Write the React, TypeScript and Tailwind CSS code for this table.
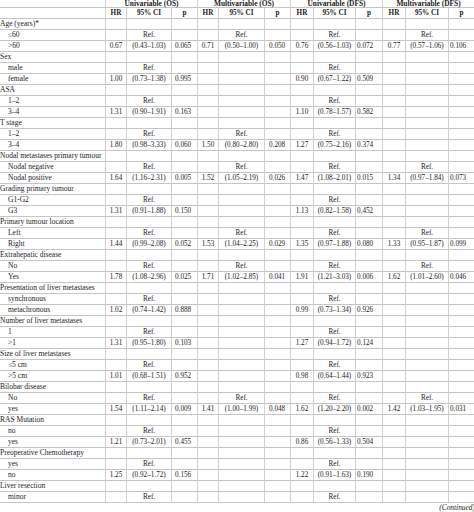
import React from "react";

type G = null | "R" | [string, string, string];
type Row = { label: string; cat?: boolean; g?: G[] };

const rows: Row[] = [
  { label: "Age (years)*", cat: true },
  { label: "≤60", g: ["R", "R", "R", "R"] },
  { label: ">60", g: [["0.67", "(0.43–1.03)", "0.065"], ["0.71", "(0.50–1.00)", "0.050"], ["0.76", "(0.56–1.03)", "0.072"], ["0.77", "(0.57–1.06)", "0.106"]] },
  { label: "Sex", cat: true },
  { label: "male", g: ["R", null, "R", null] },
  { label: "female", g: [["1.00", "(0.73–1.38)", "0.995"], null, ["0.90", "(0.67–1.22)", "0.509"], null] },
  { label: "ASA", cat: true },
  { label: "1–2", g: ["R", null, "R", null] },
  { label: "3–4", g: [["1.31", "(0.90–1.91)", "0.163"], null, ["1.10", "(0.78–1.57)", "0.582"], null] },
  { label: "T stage", cat: true },
  { label: "1–2", g: ["R", "R", "R", null] },
  { label: "3–4", g: [["1.80", "(0.98–3.33)", "0.060"], ["1.50", "(0.80–2.80)", "0.208"], ["1.27", "(0.75–2.16)", "0.374"], null] },
  { label: "Nodal metastases primary tumour", cat: true },
  { label: "Nodal negative", g: ["R", "R", "R", "R"] },
  { label: "Nodal positive", g: [["1.64", "(1.16–2.31)", "0.005"], ["1.52", "(1.05–2.19)", "0.026"], ["1.47", "(1.08–2.01)", "0.015"], ["1.34", "(0.97–1.84)", "0.073"]] },
  { label: "Grading primary tumour", cat: true },
  { label: "G1-G2", g: ["R", null, "R", null] },
  { label: "G3", g: [["1.31", "(0.91–1.88)", "0.150"], null, ["1.13", "(0.82–1.58)", "0.452"], null] },
  { label: "Primary tumour location", cat: true },
  { label: "Left", g: ["R", "R", "R", "R"] },
  { label: "Right", g: [["1.44", "(0.99–2.08)", "0.052"], ["1.53", "(1.04–2.25)", "0.029"], ["1.35", "(0.97–1.88)", "0.080"], ["1.33", "(0.95–1.87)", "0.099"]] },
  { label: "Extrahepatic disease", cat: true },
  { label: "No", g: ["R", "R", "R", "R"] },
  { label: "Yes", g: [["1.78", "(1.08–2.96)", "0.025"], ["1.71", "(1.02–2.85)", "0.041"], ["1.91", "(1.21–3.03)", "0.006"], ["1.62", "(1.01–2.60)", "0.046"]] },
  { label: "Presentation of liver metastases", cat: true },
  { label: "synchronous", g: ["R", null, "R", null] },
  { label: "metachronous", g: [["1.02", "(0.74–1.42)", "0.888"], null, ["0.99", "(0.73–1.34)", "0.926"], null] },
  { label: "Number of liver metastases", cat: true },
  { label: "1", g: ["R", null, "R", null] },
  { label: ">1", g: [["1.31", "(0.95–1.80)", "0.103"], null, ["1.27", "(0.94–1.72)", "0.124"], null] },
  { label: "Size of liver metastases", cat: true },
  { label: "≤5 cm", g: ["R", null, "R", null] },
  { label: ">5 cm", g: [["1.01", "(0.68–1.51)", "0.952"], null, ["0.98", "(0.64–1.44)", "0.923"], null] },
  { label: "Bilobar disease", cat: true },
  { label: "No", g: ["R", "R", "R", "R"] },
  { label: "yes", g: [["1.54", "(1.11–2.14)", "0.009"], ["1.41", "(1.00–1.99)", "0.048"], ["1.62", "(1.20–2.20)", "0.002"], ["1.42", "(1.03–1.95)", "0.031"]] },
  { label: "RAS Mutation", cat: true },
  { label: "no", g: ["R", null, "R", null] },
  { label: "yes", g: [["1.21", "(0.73–2.01)", "0.455"], null, ["0.86", "(0.56–1.33)", "0.504"], null] },
  { label: "Preoperative Chemotherapy", cat: true },
  { label: "yes", g: ["R", null, "R", null] },
  { label: "no", g: [["1.25", "(0.92–1.72)", "0.156"], null, ["1.22", "(0.91–1.63)", "0.190"], null] },
  { label: "Liver resection", cat: true },
  { label: "minor", g: ["R", null, "R", null] },
];

const line = "border-b border-[#c6c6c6]";
const cell = `h-[11px] leading-[10px] whitespace-nowrap ${line} border-l border-l-[#d0d0d0] text-center text-[7.2px]`;
const pCell = ["pl-[3px] text-left", "pl-[4px] text-left", "pl-[1px] text-left", "pl-[1px] text-left"];

function Group({ v, i }: { v: G; i: number }) {
  const hr = v && v !== "R" ? v[0] : "";
  const ci = v === "R" ? "Ref." : v ? v[1] : "";
  const p = v && v !== "R" ? v[2] : "";
  return (
    <>
      <div className={cell}>{hr}</div>
      <div className={cell}>{ci}</div>
      <div className={`${cell} ${pCell[i]}`}>{p}</div>
    </>
  );
}

export default function App() {
  const groups = ["Univariable (OS)", "Multivariable (OS)", "Univariable (DFS)", "Multivariable (DFS)"];
  return (
    <div className="w-[474px] h-[512px] overflow-hidden bg-white text-[#1c1c1c] font-['Liberation_Serif',serif]">
      <div className="grid grid-cols-[105px_21px_45px_26px_21px_46px_26px_23px_42px_27px_23px_43px_26px]">
        <div className={`h-[8px] ${line}`}></div>
        {groups.map((g) => (
          <div
            key={g}
            className={`col-span-3 h-[8px] leading-[7px] font-bold text-center whitespace-nowrap text-[7.4px] ${line} border-l border-l-[#d0d0d0]`}
          >
            {g}
          </div>
        ))}
        <div className={`h-[11px] ${line}`}></div>
        {groups.map((g) => (
          <React.Fragment key={g}>
            <div className={`${cell} font-bold`}>HR</div>
            <div className={`${cell} font-bold`}>95% CI</div>
            <div className={`${cell} font-bold`}>p</div>
          </React.Fragment>
        ))}
        {rows.map((r, idx) => (
          <React.Fragment key={idx}>
            <div
              className={`h-[11px] leading-[10px] whitespace-nowrap text-[7.5px] ${line} ${
                r.cat ? "pl-0" : "pl-[8px]"
              }`}
            >
              {r.label}
            </div>
            {(r.g ?? [null, null, null, null]).map((v, i) => (
              <Group key={i} v={v} i={i} />
            ))}
          </React.Fragment>
        ))}
      </div>
      <div className="text-right italic leading-[9px] text-[7.4px] -mr-[1px]">(Continued)</div>
    </div>
  );
}
